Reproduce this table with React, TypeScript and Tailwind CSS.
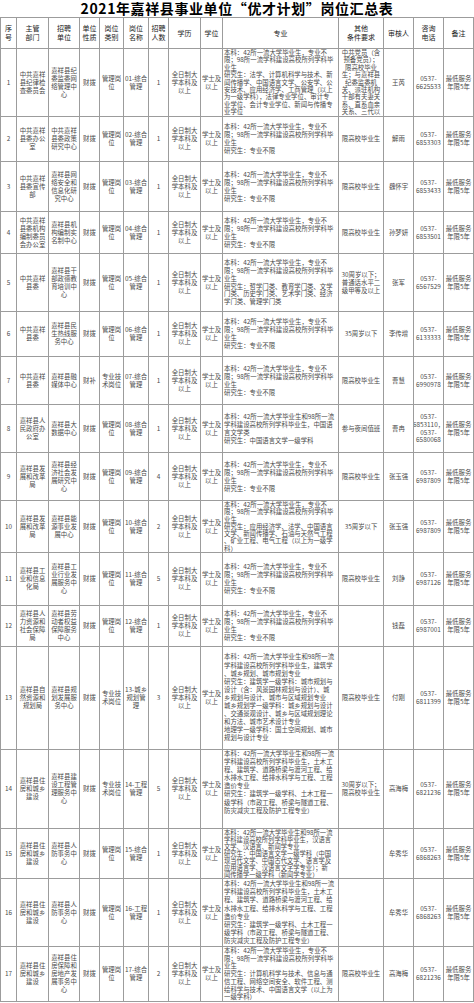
import React from "react";

type Row = {
  no: string;
  dept: string[];
  unit: string[];
  nature: string;
  cat: string[];
  name: string[];
  count: string;
  major: string[];
  majorCls: string;
  other: string[];
  otherCls?: string;
  reviewer: string;
  phone: string[];
};

const STD3 = ["本科：42所一流大学毕业生，专业不", "限；98所一流学科建设高校所列学科毕", "业生"];
const STD = [...STD3, "研究生：专业不限"];
const MGMT = ["管理岗", "位"];
const TECH = ["专业技", "术岗位"];
const ZHUJIAN = ["嘉祥县住", "房和城乡", "建设"];
const GRAD = "限高校毕业生";
const CIVIL = [
  "本科：42所一流大学毕业生和98所一流",
  "学科建设高校所列学科毕业生，土木工",
  "程、建筑学、道路桥梁与渡河工程、给",
  "水排水工程、给排水科学与工程、工程",
  "造价专业",
  "研究生：建筑学一级学科、土木工程一",
  "级学科（市政工程、桥梁与隧道工程、",
  "防灾减灾工程及防护工程专业）",
];

const CENTER = "justify-center leading-[8px]";

const rows: Row[] = [
  {
    no: "1",
    dept: ["中共嘉祥", "县纪律检", "查委员会"],
    unit: ["嘉祥县纪", "委监委网", "络管理中", "心"],
    nature: "财拨",
    cat: MGMT,
    name: ["01-综合", "管理"],
    count: "1",
    major: [
      ...STD3,
      "研究生：法学、计算机科学与技术、新",
      "闻传播学、中国语言文学、公安学、公",
      "安技术、应用经济学、工商管理（以上",
      "为一级学科），法律专业学位、审计专",
      "业学位、会计专业学位、新闻与传播专",
      "业学位",
    ],
    majorCls: "justify-start leading-[7.4px]",
    other: [
      "中共党员（含",
      "预备党员）；",
      "限高校毕业",
      "生；与嘉祥县",
      "纪委监委机",
      "关、派驻机构",
      "干部有夫妻关",
      "系、直系血亲",
      "关系、三代以",
    ],
    otherCls: "justify-start leading-[7.4px]",
    reviewer: "王芮",
    phone: ["0537-", "6625533"],
  },
  {
    no: "2",
    dept: ["中共嘉祥", "县委办公", "室"],
    unit: ["中共嘉祥", "县委政策", "研究中心"],
    nature: "财拨",
    cat: MGMT,
    name: ["02-综合", "管理"],
    count: "1",
    major: STD,
    majorCls: CENTER,
    other: [GRAD],
    reviewer: "解雨",
    phone: ["0537-", "6853303"],
  },
  {
    no: "3",
    dept: ["中共嘉祥", "县委宣传", "部"],
    unit: ["嘉祥县网", "络安全和", "信息化研", "究中心"],
    nature: "财拨",
    cat: MGMT,
    name: ["03-综合", "管理"],
    count: "1",
    major: STD,
    majorCls: CENTER,
    other: [GRAD],
    reviewer: "魏怀宇",
    phone: ["0537-", "6853433"],
  },
  {
    no: "4",
    dept: ["中共嘉祥", "县委机构", "编制委员", "会办公室"],
    unit: ["嘉祥县机", "构编制实", "名制中心"],
    nature: "财拨",
    cat: MGMT,
    name: ["04-综合", "管理"],
    count: "1",
    major: STD,
    majorCls: CENTER,
    other: [GRAD],
    reviewer: "孙梦妍",
    phone: ["0537-", "6853501"],
  },
  {
    no: "5",
    dept: ["中共嘉祥", "县委"],
    unit: ["嘉祥县干", "部政德教", "育培训中", "心"],
    nature: "财拨",
    cat: MGMT,
    name: ["05-综合", "管理"],
    count: "1",
    major: [
      ...STD3,
      "研究生：哲学门类、教育学门类、文学",
      "门类、历史学门类、艺术学门类、经济",
      "学门类、管理学门类",
    ],
    majorCls: "justify-center leading-[7.9px]",
    other: ["30周岁以下；", "普通话水平二", "级甲等及以上"],
    reviewer: "张军",
    phone: ["0537-", "6567529"],
  },
  {
    no: "6",
    dept: ["中共嘉祥", "县委"],
    unit: ["嘉祥县民", "生热线服", "务中心"],
    nature: "财拨",
    cat: MGMT,
    name: ["06-综合", "管理"],
    count: "1",
    major: STD,
    majorCls: CENTER,
    other: ["35周岁以下"],
    reviewer: "李传增",
    phone: ["0537-", "6133333"],
  },
  {
    no: "7",
    dept: ["中共嘉祥", "县委"],
    unit: ["嘉祥县融", "媒体中心"],
    nature: "财补",
    cat: TECH,
    name: ["07-综合", "管理"],
    count: "1",
    major: STD,
    majorCls: CENTER,
    other: [GRAD],
    reviewer: "曹慧",
    phone: ["0537-", "6990978"],
  },
  {
    no: "8",
    dept: ["嘉祥县人", "民政府办", "公室"],
    unit: ["嘉祥县大", "数据中心"],
    nature: "财拨",
    cat: MGMT,
    name: ["08-综合", "管理"],
    count: "1",
    major: [
      "本科：42所一流大学毕业生和98所一流",
      "学科建设高校所列学科毕业生，中国语",
      "言文学类",
      "研究生：中国语言文学一级学科",
    ],
    majorCls: CENTER,
    other: ["参与夜间值班"],
    reviewer: "曹冉",
    phone: ["0537-", "6853110，", "0537-", "6580068"],
  },
  {
    no: "9",
    dept: ["嘉祥县发", "展和改革", "局"],
    unit: ["嘉祥县经", "济社会发", "展研究中", "心"],
    nature: "财拨",
    cat: MGMT,
    name: ["09-综合", "管理"],
    count: "4",
    major: STD,
    majorCls: CENTER,
    other: [GRAD],
    reviewer: "张玉强",
    phone: ["0537-", "6987809"],
  },
  {
    no: "10",
    dept: ["嘉祥县发", "展和改革", "局"],
    unit: ["嘉祥县能", "源事业发", "展中心"],
    nature: "财拨",
    cat: MGMT,
    name: ["10-综合", "管理"],
    count: "2",
    major: [
      ...STD3,
      "研究生：应用经济学、法学、中国语言",
      "文学、新闻传播学、石油与天然气工程",
      "、矿业工程、电气工程（以上为一级学",
      "科）",
    ],
    majorCls: "justify-center leading-[7.3px]",
    other: ["35周岁以下"],
    reviewer: "张玉强",
    phone: ["0537-", "6987809"],
  },
  {
    no: "11",
    dept: ["嘉祥县工", "业和信息", "化局"],
    unit: ["嘉祥县工", "业行业发", "展服务中", "心"],
    nature: "财拨",
    cat: MGMT,
    name: ["11-综合", "管理"],
    count: "5",
    major: STD,
    majorCls: CENTER,
    other: [GRAD],
    reviewer: "刘静",
    phone: ["0537-", "6987126"],
  },
  {
    no: "12",
    dept: ["嘉祥县人", "力资源和", "社会保障", "局"],
    unit: ["嘉祥县劳", "动者权益", "保障服务", "中心"],
    nature: "财拨",
    cat: MGMT,
    name: ["12-综合", "管理"],
    count: "1",
    major: STD,
    majorCls: CENTER,
    other: [],
    reviewer: "钱磊",
    phone: ["0537-", "6987001"],
  },
  {
    no: "13",
    dept: ["嘉祥县自", "然资源和", "规划局"],
    unit: ["嘉祥县规", "划发展服", "务中心"],
    nature: "财拨",
    cat: TECH,
    name: ["13-城乡", "规划管", "理"],
    count: "3",
    major: [
      "本科：42所一流大学毕业生和98所一流",
      "学科建设高校所列学科毕业生，建筑学",
      "、城乡规划、城市规划专业",
      "研究生：建筑学一级学科：城市规划与",
      "设计（含：风景园林规划与设计）、城",
      "乡规划与设计、城市与区域规划专业",
      "城乡规划学一级学科：城乡规划与设计",
      "、交通景观设计、城乡与区域规划理论",
      "和方法、城市艺术设计专业",
      "地理学一级学科：国土空间规划、城市",
      "规划与设计专业",
    ],
    majorCls: "justify-center leading-[8.1px]",
    other: [GRAD],
    reviewer: "付刚",
    phone: ["0537-", "6811399"],
  },
  {
    no: "14",
    dept: ZHUJIAN,
    unit: ["嘉祥县建", "设工程管", "理服务中", "心"],
    nature: "财拨",
    cat: TECH,
    name: ["14-工程", "管理"],
    count: "5",
    major: CIVIL,
    majorCls: "justify-start leading-[8.1px]",
    other: ["30周岁以下；", "限高校毕业生"],
    reviewer: "高海梅",
    phone: ["0537-", "6821236"],
  },
  {
    no: "15",
    dept: ZHUJIAN,
    unit: ["嘉祥县人", "防事务中", "心"],
    nature: "财拨",
    cat: MGMT,
    name: ["15-综合", "管理"],
    count: "1",
    major: [
      "本科：42所一流大学毕业生和98所一流",
      "学科建设高校所列学科毕业生，汉语言",
      "文学、汉语言、新闻学专业",
      "研究生：中国语言文学一级学科（中国",
      "现当代文学、中国古代文学、语言学及",
      "应用语言学、汉语言文字学专业）；新",
      "闻传播学一级学科（新闻学专业）",
    ],
    majorCls: "justify-center text-[6.3px] leading-[7px]",
    other: [],
    reviewer: "牟秀华",
    phone: ["0537-", "6868263"],
  },
  {
    no: "16",
    dept: ZHUJIAN,
    unit: ["嘉祥县人", "防事务中", "心"],
    nature: "财拨",
    cat: MGMT,
    name: ["16-工程", "管理"],
    count: "1",
    major: CIVIL,
    majorCls: "justify-start pt-[1px] leading-[8.2px]",
    other: [],
    reviewer: "牟秀华",
    phone: ["0537-", "6868263"],
  },
  {
    no: "17",
    dept: ZHUJIAN,
    unit: ["嘉祥县住", "房保障和", "房地产发", "展事务中", "心"],
    nature: "财拨",
    cat: MGMT,
    name: ["17-综合", "管理"],
    count: "2",
    major: [
      ...STD3,
      "研究生：计算机科学与技术、信息与通",
      "信工程、网络空间安全、软件工程、测",
      "绘科学与技术、中国语言文学（以上为",
      "一级学科）",
    ],
    majorCls: "justify-center leading-[7.7px]",
    other: [GRAD],
    reviewer: "高海梅",
    phone: ["0537-", "6821236"],
  },
];

const EDU = ["全日制大", "学本科及", "以上"];
const DEG = ["学士及", "以上"];
const NOTE = ["最低服务", "年限5年"];

function Cell({ lines, cls }: { lines: string[]; cls?: string }) {
  return (
    <div
      className={`bg-white flex flex-col items-center overflow-hidden whitespace-nowrap text-center ${
        cls ?? "justify-center leading-[8px]"
      }`}
    >
      {lines.map((l, i) => (
        <span key={i}>{l}</span>
      ))}
    </div>
  );
}

function MajorCell({ lines, cls }: { lines: string[]; cls: string }) {
  return (
    <div className={`bg-white flex flex-col items-start overflow-hidden whitespace-nowrap pl-[1px] text-left ${cls}`}>
      {lines.map((l, i) => (
        <span key={i}>{l}</span>
      ))}
    </div>
  );
}

function Head({ lines }: { lines: string[] }) {
  return (
    <div className="bg-white flex flex-col items-center justify-center whitespace-nowrap text-center text-[7px] leading-[9px] text-[#1a1a1a]">
      {lines.map((l, i) => (
        <span key={i}>{l}</span>
      ))}
    </div>
  );
}

export default function App() {
  return (
    <div className="w-[474px] bg-white font-['Noto_Sans_CJK_SC','Noto_Sans',sans-serif]">
      <div className="h-[17px] text-center text-[14px] font-bold leading-[17px] tracking-[0.6px] text-black">
        2021年嘉祥县事业单位“优才计划”岗位汇总表
      </div>
      <div className="grid w-[474px] grid-cols-[15px_31px_30px_19px_23px_24px_19px_31px_21px_115px_44px_29px_29px_29px] grid-rows-[30px_67px_44px_49px_41px_57px_44px_47px_47px_47px_51px_52px_40px_102px_78px_49px_67px_54px] gap-px bg-[#9c9c9c] p-px text-[6.4px] text-[#4a4a4a]">
        <Head lines={["序", "号"]} />
        <Head lines={["主管", "部门"]} />
        <Head lines={["招聘", "单位"]} />
        <Head lines={["单位", "性质"]} />
        <Head lines={["岗位", "类别"]} />
        <Head lines={["岗位", "名称"]} />
        <Head lines={["招聘", "人数"]} />
        <Head lines={["学历"]} />
        <Head lines={["学位"]} />
        <Head lines={["专业"]} />
        <Head lines={["其他", "条件要求"]} />
        <Head lines={["审核人"]} />
        <Head lines={["咨询", "电话"]} />
        <Head lines={["备注"]} />
        {rows.map((r) => (
          <React.Fragment key={r.no}>
            <Cell lines={[r.no]} />
            <Cell lines={r.dept} />
            <Cell lines={r.unit} />
            <Cell lines={[r.nature]} />
            <Cell lines={r.cat} />
            <Cell lines={r.name} />
            <Cell lines={[r.count]} />
            <Cell lines={EDU} />
            <Cell lines={DEG} />
            <MajorCell lines={r.major} cls={r.majorCls} />
            <Cell lines={r.other} cls={r.otherCls} />
            <Cell lines={[r.reviewer]} />
            <Cell lines={r.phone} cls="justify-center leading-[7.6px]" />
            <Cell lines={NOTE} />
          </React.Fragment>
        ))}
      </div>
    </div>
  );
}
